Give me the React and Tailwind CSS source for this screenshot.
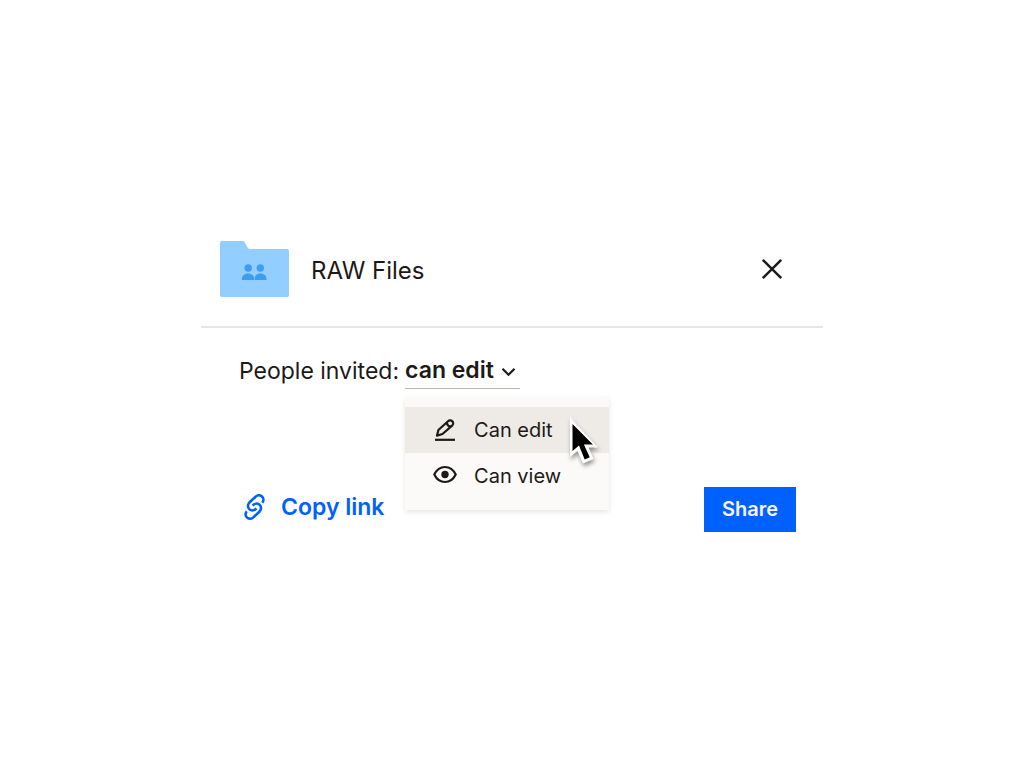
import React, { useState } from 'react';

const options = [
  { value: 'edit', label: 'Can edit', Icon: PencilIcon },
  { value: 'view', label: 'Can view', Icon: EyeIcon },
];

export default function App() {
  const [access, setAccess] = useState('edit');

  return (
    <main className="min-h-screen bg-white flex items-center justify-center font-['Inter',sans-serif] text-[#1e1919]">
      <section aria-labelledby="share-title" className="w-full max-w-[622px]">
        <header className="flex items-center pt-4 pb-[29px] pl-[19px] pr-10 border-b-2 border-[#e6e6e6]">
          <FolderIcon />
          <h1 id="share-title" className="ml-[22px] pt-1 text-[24px] leading-8 font-normal">RAW Files</h1>
          <button type="button" aria-label="Close" className="ml-auto">
            <CloseIcon />
          </button>
        </header>

        <div className="pt-[25px] pb-3 pl-[38px] pr-[27px]">
          <div className="flex items-center">
            <label htmlFor="access" className="text-[23px] leading-8">People invited:</label>
            <div className="relative ml-[6px]">
              <select
                id="access"
                value={access}
                onChange={(e) => setAccess(e.target.value)}
                className="block w-[115px] h-9 appearance-none bg-transparent border-b border-[#bbb5ae] text-[23px] leading-8 font-semibold outline-none"
              >
                <option value="edit">can edit</option>
                <option value="view">can view</option>
              </select>
              <ChevronIcon />
              <AccessMenu onSelect={setAccess} />
            </div>
          </div>

          <footer className="flex items-start justify-between mt-[98px]">
            <button type="button" className="flex items-center pt-1 pl-1 text-[#0061fe] text-[23px] leading-8 font-semibold">
              <LinkIcon />
              <span className="ml-[14px]">Copy link</span>
            </button>
            <button type="button" className="w-[92px] h-[45px] bg-[#0061fe] text-[#f7f5f2] text-[20px] leading-8 font-semibold">
              Share
            </button>
          </footer>
        </div>
      </section>
    </main>
  );
}

function AccessMenu({ onSelect }) {
  return (
    <div className="absolute left-0 top-full mt-2 w-[204px] pt-[10px] pb-[11px] bg-[#fbfaf8] shadow-[0_2px_5px_rgba(0,0,0,0.1)]">
      {options.map(({ value, label, Icon }) => (
        <button
          key={value}
          type="button"
          onClick={() => onSelect(value)}
          className={`flex items-center w-full h-[46px] pl-7 text-[20px] leading-8 ${value === 'edit' ? 'bg-[#eeebe7]' : ''}`}
        >
          <Icon />
          <span className="ml-[17px]">{label}</span>
        </button>
      ))}
      <Cursor />
    </div>
  );
}

function FolderIcon() {
  return (
    <svg width="69" height="56" viewBox="0 0 69 56" aria-hidden="true">
      <path d="M2 0h20.500q1.500 0 2.200 1.300l3 5.400Q28.500 8 30 8h37q2 0 2 2v44q0 2-2 2H2q-2 0-2-2V2Q0 0 2 0z" fill="#92ceff" />
      <g fill="#3d9df3">
        <circle cx="28.200" cy="27" r="3.700" />
        <circle cx="40.300" cy="27" r="3.700" />
        <path d="M22 39v-1c0-3.200 2.500-5.500 6.200-5.500s6 2.300 6 5.500v1z" />
        <path d="M34.600 39v-1c0-3.200 2.200-5.500 5.800-5.500s6.100 2.300 6.100 5.500v1z" />
      </g>
    </svg>
  );
}

function CloseIcon() {
  return (
    <svg width="22" height="22" viewBox="0 0 22 22" fill="none" stroke="currentColor" strokeWidth="2.500" aria-hidden="true">
      <path d="M1.800 1.800l18.400 18.400M20.200 1.800L1.800 20.200" />
    </svg>
  );
}

function ChevronIcon() {
  return (
    <svg className="absolute right-1 top-[14px] pointer-events-none" width="15" height="10" viewBox="0 0 15 10" fill="none" stroke="currentColor" strokeWidth="2.200" aria-hidden="true">
      <path d="M1.500 1.700l6 6 6-6" />
    </svg>
  );
}

function PencilIcon() {
  return (
    <svg width="24" height="24" viewBox="0 0 24 24" fill="none" stroke="currentColor" strokeWidth="2.200" aria-hidden="true">
      <path d="M2 21.800h20" />
      <path d="M4 17.600l1.400-5.600L15 3.300a2.900 2.900 0 0 1 4.400 4L9.500 16z" strokeLinejoin="round" />
      <path d="M13.700 4.700q.6 3.300 4.100 4" />
    </svg>
  );
}

function EyeIcon() {
  return (
    <svg width="24" height="24" viewBox="0 0 24 24" fill="none" stroke="currentColor" strokeWidth="2.200" aria-hidden="true">
      <path d="M1.300 10.500C3.600 5.800 7.300 3 12 3s8.400 2.800 10.700 7.500C20.400 15.200 16.700 18 12 18S3.600 15.200 1.300 10.500z" />
      <circle cx="12" cy="10.500" r="3.700" fill="currentColor" stroke="none" />
    </svg>
  );
}

function LinkIcon() {
  return (
    <svg width="24" height="28" viewBox="0 0 24 28" fill="none" stroke="currentColor" strokeWidth="2.600" aria-hidden="true">
      <path d="M19.300 9.800c1.700-2.300 1.400-5-.6-6.600-2-1.500-4.700-1.200-6.400.8L6.400 9.500c-2 2.300-1.900 5.300.3 7 2.100 1.500 4.900 1 6.700-1.100" />
      <path d="M3.700 18.200c-1.700 2.300-1.400 5 .6 6.600 2 1.500 4.700 1.200 6.400-.8l5.900-5.500c2-2.300 1.900-5.300-.3-7-2.100-1.500-4.900-1-6.700 1.100" />
    </svg>
  );
}

function Cursor() {
  return (
    <svg className="absolute left-[162px] top-[16px] pointer-events-none drop-shadow-[1px_3px_2px_rgba(0,0,0,0.4)]" width="36" height="52" viewBox="0 0 36 52" aria-hidden="true">
      <path d="M3 4.500V44l7.500-6L16 50.500l10.500-4.500-5-11.500H31z" fill="#fff" />
      <path d="M5.500 11v27l6.500-5.500 5.700 14 5-2.200-5.800-12.800h9z" fill="#000" />
    </svg>
  );
}
